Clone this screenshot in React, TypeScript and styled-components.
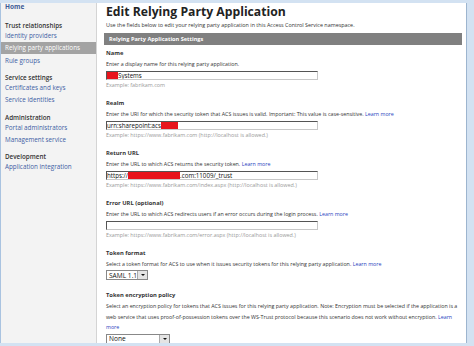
import React from "react";
import styled, { createGlobalStyle } from "styled-components";

const GlobalStyle = createGlobalStyle`
  html, body {
    margin: 0;
    padding: 0;
    background: #d3e2f2;
    font-family: "Open Sans", "Noto Sans", "DejaVu Sans", sans-serif;
  }
`;

const Frame = styled.div`
  width: 474px;
  height: 346px;
  box-sizing: border-box;
  padding: 3px 7px 3px 0;
  display: grid;
  grid-template-columns: 97px 1fr;
  overflow: hidden;
`;

const Sidebar = styled.nav`
  background: #f3f3f3;
  border-left: 1px solid #a9c3e0;
  border-right: 1px solid #d4d4d4;
  display: flex;
  flex-direction: column;
`;

const NavGroup = styled.div`
  display: flex;
  flex-direction: column;
  margin-bottom: 6.5px;
`;

const HomeLink = styled.a`
  font-size: 6.5px;
  font-weight: 700;
  color: #3c5a96;
  line-height: 8px;
  padding: 0 4px;
  margin-bottom: 3px;
`;

const GroupTitle = styled.div`
  font-size: 6.3px;
  font-weight: 600;
  color: #333;
  line-height: 9px;
  padding: 0 4px;
`;

const NavItem = styled.a<{ $active?: boolean }>`
  font-size: 6.3px;
  line-height: 12px;
  padding: 0 4px;
  color: ${({ $active }) => ($active ? "#fff" : "#3e5ea4")};
  background: ${({ $active }) => ($active ? "#a3a3a3" : "transparent")};
  margin-bottom: ${({ $active }) => ($active ? "1px" : "0")};
  text-decoration: none;
`;

const Main = styled.main`
  background: #fff;
  border-right: 1px solid #9db5cf;
  padding: 2px 0 0 9px;
  display: flex;
  flex-direction: column;
  overflow: hidden;
`;

const Title = styled.h1`
  margin: 0;
  font-size: 12.2px;
  font-weight: 700;
  color: #222;
  line-height: 14px;
`;

const Intro = styled.p`
  margin: 1px 0 3px;
  font-size: 5.4px;
  line-height: 10px;
  color: #333;
`;

const SectionBar = styled.div`
  background: #808080;
  color: #fff;
  font-size: 5.6px;
  font-weight: 700;
  line-height: 12px;
  padding: 0 5px;
  margin: 0 4px 2.5px -2px;
`;

const Field = styled.section<{ $gap?: number }>`
  display: flex;
  flex-direction: column;
  margin-bottom: ${({ $gap }) => $gap ?? 7}px;
`;

const Label = styled.div`
  font-size: 5.8px;
  font-weight: 700;
  color: #333;
  line-height: 11px;
`;

const Help = styled.div`
  font-size: 5.32px;
  line-height: 10.5px;
  color: #333;
`;

const Example = styled.div`
  font-size: 5.4px;
  line-height: 11px;
  color: #999;
`;

const LearnMore = styled.a`
  color: #2a3fc0;
  text-decoration: none;
`;

const TextBox = styled.div`
  width: 212px;
  height: 9px;
  box-sizing: border-box;
  border: 1px solid #c8c8c8;
  border-top-color: #555;
  border-left-color: #555;
  display: flex;
  align-items: center;
  font-size: 6.2px;
  color: #111;
  white-space: nowrap;
  overflow: hidden;
  margin-top: 1.5px;
`;

const Redact = styled.span<{ $w: number }>`
  display: inline-block;
  height: 7px;
  width: ${({ $w }) => $w}px;
  background: #e8141c;
`;

const Select = styled.div<{ $w: number }>`
  width: ${({ $w }) => $w}px;
  height: 10px;
  box-sizing: border-box;
  border: 1px solid #888;
  display: flex;
  align-items: center;
  justify-content: space-between;
  font-size: 6.6px;
  white-space: nowrap;
  color: #111;
  padding-left: 2px;
  margin-top: 1px;
`;

const SelectArrow = styled.span`
  width: 9px;
  height: 8px;
  flex-shrink: 0;
  background: #e4e4e4;
  border-left: 1px solid #aaa;
  display: flex;
  align-items: center;
  justify-content: center;
  &::after {
    content: "";
    border-left: 2px solid transparent;
    border-right: 2px solid transparent;
    border-top: 2px solid #111;
  }
`;

export default function App() {
  return (
    <>
      <GlobalStyle />
      <Frame>
        <Sidebar>
          <NavGroup>
            <HomeLink>Home</HomeLink>
          </NavGroup>
          <NavGroup>
            <GroupTitle>Trust relationships</GroupTitle>
            <NavItem>Identity providers</NavItem>
            <NavItem $active>Relying party applications</NavItem>
            <NavItem>Rule groups</NavItem>
          </NavGroup>
          <NavGroup>
            <GroupTitle>Service settings</GroupTitle>
            <NavItem>Certificates and keys</NavItem>
            <NavItem>Service identities</NavItem>
          </NavGroup>
          <NavGroup>
            <GroupTitle>Administration</GroupTitle>
            <NavItem>Portal administrators</NavItem>
            <NavItem>Management service</NavItem>
          </NavGroup>
          <NavGroup>
            <GroupTitle>Development</GroupTitle>
            <NavItem>Application integration</NavItem>
          </NavGroup>
        </Sidebar>

        <Main>
          <Title>Edit Relying Party Application</Title>
          <Intro>
            Use the fields below to edit your relying party application in this Access Control
            Service namespace.
          </Intro>
          <SectionBar>Relying Party Application Settings</SectionBar>

          <Field>
            <Label>Name</Label>
            <Help>Enter a display name for this relying party application.</Help>
            <TextBox>
              <Redact $w={11} />
              Systems
            </TextBox>
            <Example>Example: fabrikam.com</Example>
          </Field>

          <Field>
            <Label>Realm</Label>
            <Help>
              Enter the URI for which the security token that ACS issues is valid. Important: This
              value is case-sensitive. <LearnMore>Learn more</LearnMore>
            </Help>
            <TextBox>
              urn:sharepoint:acs
              <Redact $w={17} />
            </TextBox>
            <Example>Example: https://www.fabrikam.com (http://localhost is allowed.)</Example>
          </Field>

          <Field>
            <Label>Return URL</Label>
            <Help>
              Enter the URL to which ACS returns the security token. <LearnMore>Learn more</LearnMore>
            </Help>
            <TextBox>
              https://
              <Redact $w={52} />
              .com:11009/_trust
            </TextBox>
            <Example>
              Example: https://www.fabrikam.com/index.aspx (http://localhost is allowed.)
            </Example>
          </Field>

          <Field>
            <Label>Error URL (optional)</Label>
            <Help>
              Enter the URL to which ACS redirects users if an error occurs during the login
              process. <LearnMore>Learn more</LearnMore>
            </Help>
            <TextBox />
            <Example>
              Example: https://www.fabrikam.com/error.aspx (http://localhost is allowed.)
            </Example>
          </Field>

          <Field $gap={10}>
            <Label>Token format</Label>
            <Help>
              Select a token format for ACS to use when it issues security tokens for this relying
              party application. <LearnMore>Learn more</LearnMore>
            </Help>
            <Select $w={42}>
              SAML 1.1
              <SelectArrow />
            </Select>
          </Field>

          <Field>
            <Label>Token encryption policy</Label>
            <Help>
              Select an encryption policy for tokens that ACS issues for this relying party
              application. Note: Encryption must be selected if the application is a web service
              that uses proof-of-possession tokens over the WS-Trust protocol because this scenario
              does not work without encryption. <LearnMore>Learn more</LearnMore>
            </Help>
            <Select $w={64}>
              None
              <SelectArrow />
            </Select>
          </Field>
        </Main>
      </Frame>
    </>
  );
}
